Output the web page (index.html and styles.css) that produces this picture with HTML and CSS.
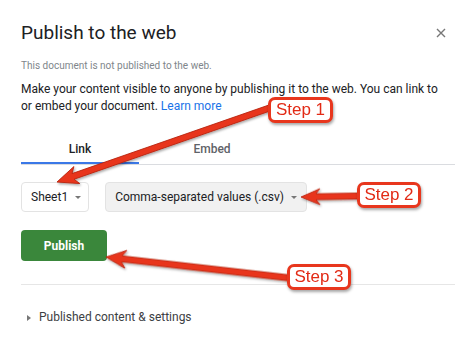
FILE: index.html
```html
<!DOCTYPE html>
<html lang="en">
<head>
  <meta charset="UTF-8">
  <title>Publish to the web</title>
  <link rel="stylesheet" href="styles.css">
</head>
<body>
  <div class="dialog">
    <header class="dialog-head">
      <h1>Publish to the web</h1>
      <span class="close">
        <svg width="10" height="10" viewBox="0 0 10 10"><path d="M1 1L9 9M9 1L1 9" stroke="#777" stroke-width="1.4"/></svg>
      </span>
    </header>

    <p class="status">This document is not published to the web.</p>
    <p class="intro">Make your content visible to anyone by publishing it to the web. You can link to or embed your document. <a href="#">Learn more</a></p>

    <div class="tabs">
      <div class="tab active">Link</div>
      <div class="tab">Embed</div>
    </div>

    <div class="selects">
      <div class="select">Sheet1 <span class="caret"></span></div>
      <div class="select grey">Comma-separated values (.csv) <span class="caret"></span></div>
    </div>

    <button class="publish">Publish</button>

    <div class="details"><span class="tri"></span>Published content &amp; settings</div>
  </div>

  <!-- annotations drawn on top of the screenshot -->
  <svg class="arrows" width="474" height="344" viewBox="0 0 474 344">
    <defs>
      <filter id="shadow" x="-10%" y="-50%" width="120%" height="200%">
        <feDropShadow dx="1" dy="1.5" stdDeviation="1.2" flood-color="#000" flood-opacity="0.35"/>
      </filter>
    </defs>
    <g filter="url(#shadow)" fill="#e8361d" stroke="#b8230f" stroke-width="0.8">
      <polygon transform="translate(57 182) rotate(-19.2)" points="0,0 21,-9 17,-3 226,-3 226,3 17,3 21,9"/>
      <polygon transform="translate(301 197) rotate(-1)" points="0,0 19,-8 15,-3 60,-3 60,3 15,3 19,8"/>
      <polygon transform="translate(106 257) rotate(6.5)" points="0,0 20,-9 16,-3 186,-3 186,3 16,3 20,9"/>
    </g>
  </svg>
  <div class="callout step1">Step 1</div>
  <div class="callout step2">Step 2</div>
  <div class="callout step3">Step 3</div>
</body>
</html>
```

FILE: styles.css
```css
body {
  margin: 0;
  width: 474px;
  height: 344px;
  position: relative;
  overflow: hidden;
  background: #fff;
  font-family: Roboto, "Liberation Sans", Arial, sans-serif;
  color: #202124;
}

.dialog {
  padding: 0 19px 0 21px;
}

.dialog-head {
  display: flex;
  justify-content: space-between;
  align-items: center;
  height: 64px;
}
.dialog-head h1 {
  margin: 0;
  font-size: 19px;
  font-weight: 400;
  color: #202124;
}
.close {
  display: flex;
  margin-right: 9px;
  margin-top: 1px;
}

.status {
  margin: -5px 0 0;
  font-size: 10px;
  color: #80868b;
  line-height: 14px;
}

.intro {
  margin: 8px 0 0;
  max-width: 424px;
  font-size: 12px;
  line-height: 17px;
  color: #202124;
}
.intro a {
  color: #1a73e8;
  text-decoration: none;
}

.tabs {
  display: flex;
  margin-top: 22px;
  border-bottom: 1px solid #dadce0;
}
.tab {
  height: 27px;
  line-height: 25px;
  text-align: center;
  font-size: 12px;
  font-weight: 500;
  color: #5f6368;
}
.tab:first-child {
  width: 118px;
}
.tab:last-child {
  width: 146px;
}
.tab.active {
  color: #202124;
  border-bottom: 2px solid #3b78e7;
  height: 25px;
}

.selects {
  display: flex;
  gap: 16px;
  margin-top: 17px;
}
.select {
  height: 28px;
  display: flex;
  align-items: center;
  gap: 7px;
  padding: 0 7px 0 9px;
  border: 1px solid #e3e3e3;
  border-radius: 4px;
  font-size: 12px;
  color: #202124;
}
.select.grey {
  background: #f1f1f1;
  padding-right: 9px;
}
.caret {
  width: 0;
  height: 0;
  border-left: 3.5px solid transparent;
  border-right: 3.5px solid transparent;
  border-top: 3.5px solid #777;
}

.publish {
  display: block;
  margin-top: 18px;
  width: 86px;
  height: 31px;
  border: none;
  border-radius: 4px;
  background: #3a873b;
  color: #fff;
  font-family: Roboto, "Liberation Sans", Arial, sans-serif;
  font-size: 12px;
  font-weight: 700;
}

.details {
  margin-top: 23px;
  border-top: 1px solid #e6e6e6;
  padding-top: 25px;
  display: flex;
  align-items: center;
  font-size: 12px;
  line-height: 15px;
  color: #3c4043;
}
.tri {
  width: 0;
  height: 0;
  border-top: 3px solid transparent;
  border-bottom: 3px solid transparent;
  border-left: 4px solid #777;
  margin: 0 8px 0 6px;
}

.arrows {
  position: absolute;
  left: 0;
  top: 0;
}

.callout {
  position: absolute;
  box-sizing: border-box;
  border: 3px solid #e8361d;
  border-radius: 7px;
  background: #fff;
  color: #e22a15;
  font-family: "Liberation Sans", Arial, sans-serif;
  font-size: 17px;
  text-align: center;
  box-shadow: 1px 2px 3px rgba(0,0,0,0.35);
}
.step1 {
  left: 268px;
  top: 97px;
  width: 65px;
  height: 26px;
  line-height: 20px;
}
.step2 {
  left: 357px;
  top: 182px;
  width: 64px;
  height: 26px;
  line-height: 20px;
}
.step3 {
  left: 287px;
  top: 264px;
  width: 64px;
  height: 26px;
  line-height: 20px;
}
```
